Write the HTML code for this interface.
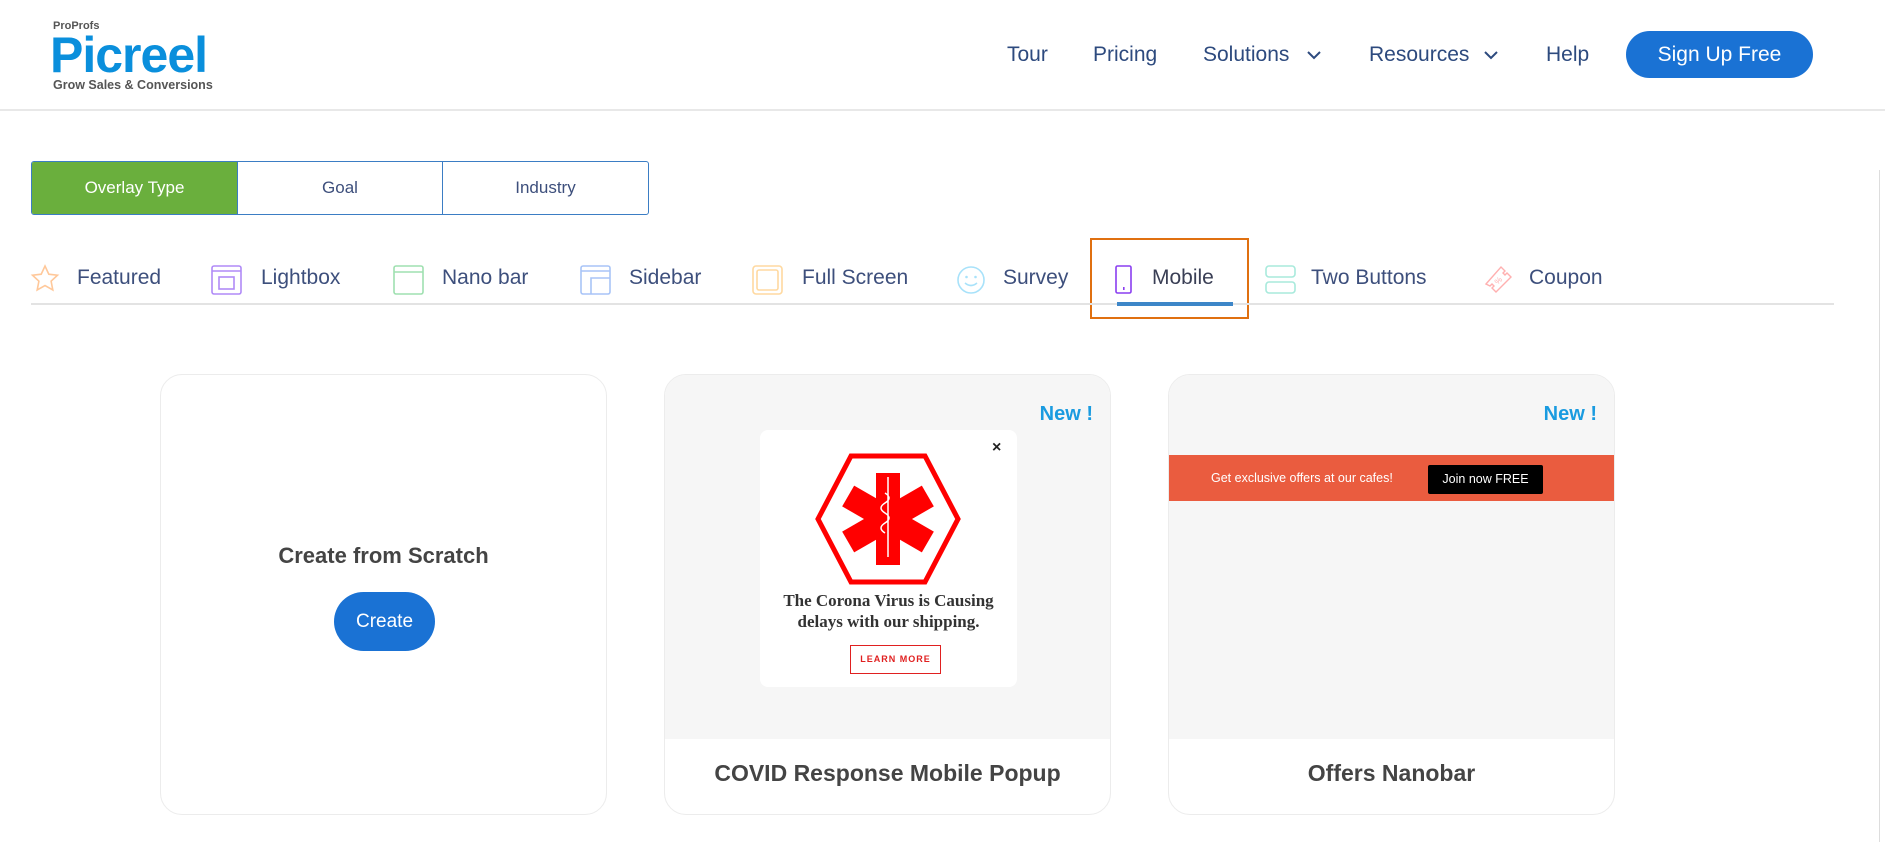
<!DOCTYPE html>
<html><head><meta charset="utf-8"><style>
*{margin:0;padding:0;box-sizing:border-box}
body{width:1885px;height:842px;overflow:hidden;background:#fff;font-family:"Liberation Sans",sans-serif;position:relative}
.a{position:absolute}
.nav{color:#2d4a7e;font-size:21px;top:43px}
.tab{color:#3d4f7c;font-size:21px;top:266px}
.ic{position:absolute;top:264px}
.card{position:absolute;top:374px;width:447px;height:441px;border:1px solid #ececec;border-radius:22px;overflow:hidden;background:#fff}
.gray{position:absolute;left:0;top:0;width:100%;height:364px;background:#f6f6f6}
.ttl{position:absolute;left:0;width:100%;text-align:center;top:385px;font-size:23px;font-weight:bold;color:#444}
.new{position:absolute;right:17px;top:28px;color:#1a9be0;font-weight:bold;font-size:20px}
</style></head><body>
<div class="a" style="left:53px;top:20px;font-size:11px;font-weight:bold;color:#555">ProProfs</div>
<div class="a" style="left:50px;top:27px;font-size:50px;font-weight:bold;color:#0a8fdc;letter-spacing:-1px;line-height:56px">Picreel</div>
<div class="a" style="left:53px;top:78px;font-size:12.5px;font-weight:bold;color:#555">Grow Sales &amp; Conversions</div>
<div class="a nav" style="left:1007px">Tour</div>
<div class="a nav" style="left:1093px">Pricing</div>
<div class="a nav" style="left:1203px">Solutions</div>
<svg class="a" style="left:1306px;top:49px" width="16" height="12"><path d="M2 3l6 6 6-6" stroke="#2d4a7e" stroke-width="2" fill="none"/></svg>
<div class="a nav" style="left:1369px">Resources</div>
<svg class="a" style="left:1483px;top:49px" width="16" height="12"><path d="M2 3l6 6 6-6" stroke="#2d4a7e" stroke-width="2" fill="none"/></svg>
<div class="a nav" style="left:1546px">Help</div>
<div class="a" style="left:1626px;top:31px;width:187px;height:47px;border-radius:24px;background:#1a72d4;color:#fff;font-size:21px;text-align:center;line-height:47px">Sign Up Free</div>
<div class="a" style="left:0;top:109px;width:1885px;height:2px;background:#e8e8e8"></div>
<div class="a" style="left:1879px;top:170px;width:1px;height:672px;background:#ddd"></div>

<div class="a" style="left:31px;top:161px;width:618px;height:54px;border:1px solid #3b7dc4;border-radius:3px;display:flex;font-size:17px;color:#3d4f7c;overflow:hidden">
<div style="width:205px;background:#6aaf3d;color:#fff;text-align:center;line-height:52px">Overlay Type</div>
<div style="width:205px;border-left:1px solid #3b7dc4;text-align:center;line-height:52px">Goal</div>
<div style="flex:1;border-left:1px solid #3b7dc4;text-align:center;line-height:52px">Industry</div>
</div>

<svg class="ic" style="left:30px;top:264px" width="30" height="30"><path d="M15 2l3.8 8.2 8.7 1-6.4 6 1.7 8.8L15 21.6 7.2 26l1.7-8.8-6.4-6 8.7-1z" fill="none" stroke="#ffc89a" stroke-width="1.6"/></svg>
<div class="a tab" style="left:77px">Featured</div>
<svg class="ic" style="left:211px;top:265px" width="32" height="30"><rect x="1" y="1" width="29" height="28" rx="2" fill="none" stroke="#b08af7" stroke-width="1.6"/><line x1="1" y1="6" x2="30" y2="6" stroke="#b08af7" stroke-width="1.6"/><rect x="8" y="12" width="15" height="12" fill="none" stroke="#b08af7" stroke-width="1.6"/></svg>
<div class="a tab" style="left:261px">Lightbox</div>
<svg class="ic" style="left:393px;top:265px" width="32" height="30"><rect x="1" y="1" width="29" height="28" rx="2" fill="none" stroke="#9fe0b0" stroke-width="1.6"/><line x1="1" y1="7" x2="30" y2="7" stroke="#9fe0b0" stroke-width="1.6"/></svg>
<div class="a tab" style="left:442px">Nano bar</div>
<svg class="ic" style="left:580px;top:265px" width="32" height="30"><rect x="1" y="1" width="29" height="28" rx="2" fill="none" stroke="#a8c4f7" stroke-width="1.6"/><line x1="1" y1="6" x2="30" y2="6" stroke="#a8c4f7" stroke-width="1.6"/><path d="M11 29V13h19" fill="none" stroke="#a8c4f7" stroke-width="1.6"/></svg>
<div class="a tab" style="left:629px">Sidebar</div>
<svg class="ic" style="left:752px;top:265px" width="32" height="30"><rect x="1" y="1" width="29" height="28" rx="3" fill="none" stroke="#ffd9a0" stroke-width="1.6"/><rect x="5" y="5" width="21" height="20" rx="2" fill="none" stroke="#ffd9a0" stroke-width="1.6"/></svg>
<div class="a tab" style="left:802px">Full Screen</div>
<svg class="ic" style="left:956px;top:265px" width="30" height="30"><circle cx="15" cy="15" r="13" fill="none" stroke="#a8e2fa" stroke-width="1.6"/><circle cx="10.5" cy="12" r="1.3" fill="#a8e2fa"/><circle cx="19.5" cy="12" r="1.3" fill="#a8e2fa"/><path d="M9 18q6 5 12 0" fill="none" stroke="#a8e2fa" stroke-width="1.6"/></svg>
<div class="a tab" style="left:1003px">Survey</div>
<div class="a" style="left:1090px;top:238px;width:159px;height:81px;border:2px solid #e07010"></div>
<svg class="ic" style="left:1115px;top:265px" width="18" height="30"><rect x="1" y="1" width="15" height="27" rx="1.5" fill="none" stroke="#8a3ef0" stroke-width="1.6"/><rect x="8" y="22" width="1.6" height="3" fill="#8a3ef0"/></svg>
<div class="a tab" style="left:1152px;color:#3a3f55">Mobile</div>
<div class="a" style="left:31px;top:303px;width:1803px;height:2px;background:#e3e3e3"></div>
<div class="a" style="left:1117px;top:302px;width:116px;height:4px;background:#3d86c8"></div>
<svg class="ic" style="left:1265px;top:265px" width="32" height="30"><rect x="1" y="1" width="29" height="11" rx="3" fill="none" stroke="#a8eadc" stroke-width="1.6"/><rect x="1" y="17" width="29" height="11" rx="3" fill="none" stroke="#a8eadc" stroke-width="1.6"/></svg>
<div class="a tab" style="left:1311px">Two Buttons</div>
<svg class="ic" style="left:1482px;top:264px" width="30" height="30"><path d="M4 20L19 3l4 4-2 2 2 2 2-2 4 4L14 28l-4-4 2-2-2-2-2 2z" fill="none" stroke="#ffb0b0" stroke-width="1.4"/><text x="12" y="20" font-size="8" fill="#ffb0b0" font-family="Liberation Sans" transform="rotate(-45 15 16)">%</text></svg>
<div class="a tab" style="left:1529px">Coupon</div>

<div class="card" style="left:160px">
<div class="a" style="left:0;width:100%;text-align:center;top:168px;font-size:22px;font-weight:bold;color:#444">Create from Scratch</div>
<div class="a" style="left:173px;top:217px;width:101px;height:59px;border-radius:30px;background:#1a72d4;color:#fff;font-size:19px;text-align:center;line-height:59px">Create</div>
</div>

<div class="card" style="left:664px">
<div class="gray"></div>
<div class="new">New !</div>
<div class="a" style="left:95px;top:55px;width:257px;height:257px;background:#fff;border-radius:8px"></div>
<div class="a" style="left:327px;top:64px;font-size:16px;font-weight:bold;color:#222">×</div>
<svg class="a" style="left:150px;top:78px" width="146" height="132"><polygon points="36,3 110,3 143,66 110,129 36,129 3,66" fill="#fff" stroke="#f00" stroke-width="5"/><g fill="#f00" transform="translate(73,66)"><rect x="-12" y="-46" width="24" height="92"/><rect x="-12" y="-46" width="24" height="92" transform="rotate(60)"/><rect x="-12" y="-46" width="24" height="92" transform="rotate(-60)"/></g><path d="M73 24v80M70 40q8 5 0 10q-8 5 0 10q8 5 0 10q-8 5 0 10" stroke="#fff" stroke-width="1.5" fill="none"/></svg>
<div class="a" style="left:95px;top:215px;width:257px;text-align:center;font-family:'Liberation Serif',serif;font-weight:bold;font-size:17px;line-height:21px;color:#333">The Corona Virus is Causing<br>delays with our shipping.</div>
<div class="a" style="left:185px;top:270px;width:91px;height:29px;border:1.5px solid #e02020;color:#e02020;font-size:9px;font-weight:bold;text-align:center;line-height:26px;letter-spacing:1px">LEARN MORE</div>
<div class="ttl">COVID Response Mobile Popup</div>
</div>

<div class="card" style="left:1168px">
<div class="gray"></div>
<div class="new">New !</div>
<div class="a" style="left:0;top:80px;width:100%;height:46px;background:#ea5c3f"></div>
<div class="a" style="left:42px;top:96px;font-size:12.5px;color:#fff">Get exclusive offers at our cafes!</div>
<div class="a" style="left:259px;top:90px;width:115px;height:29px;background:#000;border-radius:2px;color:#fff;font-size:12.5px;text-align:center;line-height:29px">Join now FREE</div>
<div class="ttl">Offers Nanobar</div>
</div>
</body></html>
